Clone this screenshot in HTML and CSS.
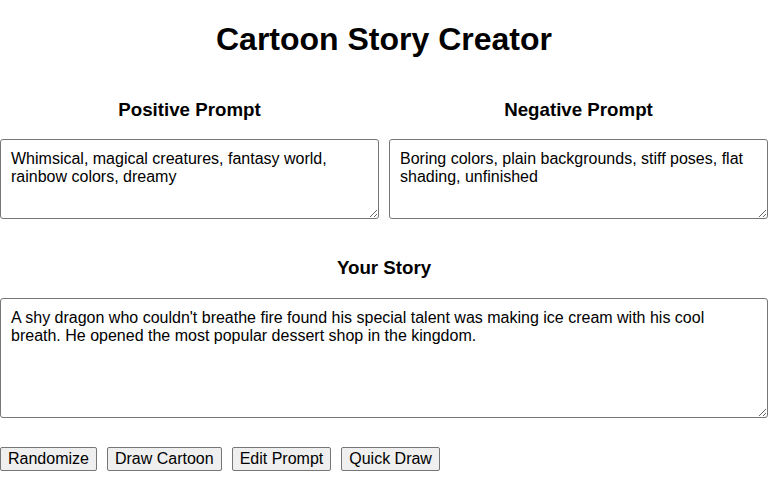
FILE: index.html
```html
<!DOCTYPE html>
<html>
<head>
<meta charset="utf-8">
<link rel="stylesheet" href="styles.css">
</head>
<body>
<div class="app">
  <h1 class="title">Cartoon Story Creator</h1>
  <div class="prompts">
    <div class="prompt-col">
      <h3 class="label">Positive Prompt</h3>
      <textarea class="field field-short">Whimsical, magical creatures, fantasy world, rainbow colors, dreamy</textarea>
    </div>
    <div class="prompt-col">
      <h3 class="label">Negative Prompt</h3>
      <textarea class="field field-short">Boring colors, plain backgrounds, stiff poses, flat shading, unfinished</textarea>
    </div>
  </div>
  <div class="story">
    <h3 class="label label-story">Your Story</h3>
    <textarea class="field field-tall">A shy dragon who couldn't breathe fire found his special talent was making ice cream with his cool breath. He opened the most popular dessert shop in the kingdom.</textarea>
  </div>
  <div class="actions">
    <button class="btn">Randomize</button>
    <button class="btn">Draw Cartoon</button>
    <button class="btn">Edit Prompt</button>
    <button class="btn">Quick Draw</button>
  </div>
</div>
</body>
</html>
```
FILE: styles.css
```css
html, body {
  margin: 0;
  padding: 0;
  background: #ffffff;
}
body {
  font-family: "Liberation Sans", Arial, sans-serif;
  color: #000;
}
.app {
  display: flex;
  flex-direction: column;
}
.title {
  font-size: 32px;
  font-weight: bold;
  text-align: center;
  margin: 21px 0 22px;
  line-height: 37px;
}
.prompts {
  display: grid;
  grid-template-columns: 1fr 1fr;
  column-gap: 10px;
}
.prompt-col {
  display: flex;
  flex-direction: column;
}
.label {
  font-size: 18.72px;
  font-weight: bold;
  text-align: center;
  margin: 19px 0;
  line-height: 21px;
}
.label-story {
  margin-bottom: 20px;
}
.field {
  display: block;
  box-sizing: border-box;
  width: 100%;
  padding: 10px;
  font-family: "Liberation Sans", Arial, sans-serif;
  font-size: 16px;
  line-height: 18px;
  color: #000;
  border: 1px solid #767676;
  border-radius: 3px;
  background: #fff;
  margin: 0;
}
.field-short {
  height: 80px;
}
.field-tall {
  height: 120px;
}
.story {
  display: flex;
  flex-direction: column;
  margin-top: 19px;
}
.actions {
  display: flex;
  gap: 10px;
  margin-top: 29px;
}
.btn {
  font-family: "Liberation Sans", Arial, sans-serif;
  font-size: 16px;
  padding: 1px 7px;
  line-height: 18px;
  color: #000;
  background: #efefef;
  border: 1px solid #767676;
  border-radius: 2px;
  height: 24px;
}
```
